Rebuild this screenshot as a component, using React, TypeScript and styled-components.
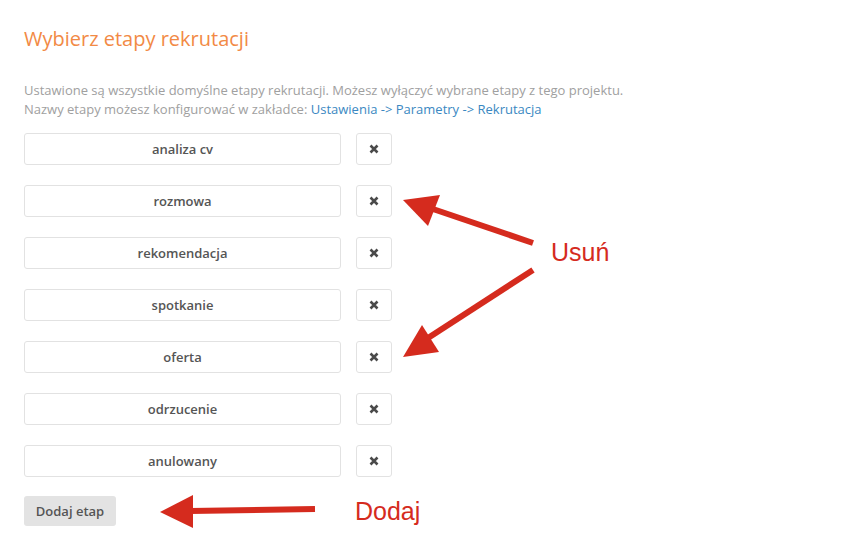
import React from "react";
import styled, { createGlobalStyle } from "styled-components";

const Global = createGlobalStyle`
  html, body { margin: 0; padding: 0; background: #fff; }
  body { font-family: "Open Sans", "Noto Sans", sans-serif; }
`;

const Page = styled.div`
  position: relative;
  width: 850px;
  height: 547px;
  overflow: hidden;
  padding: 25px 24px 0;
  box-sizing: border-box;
`;

const Title = styled.h2`
  margin: 0;
  font-size: 20px;
  line-height: 28px;
  font-weight: 400;
  color: #f28a45;
`;

const Description = styled.p`
  margin: 28px 0 0;
  font-size: 13px;
  line-height: 19px;
  color: #a0a0a0;
`;

const Link = styled.a`
  color: #3a88c2;
  text-decoration: none;
`;

const List = styled.div`
  display: flex;
  flex-direction: column;
  gap: 20px;
  margin-top: 14px;
`;

const Row = styled.div`
  display: flex;
  align-items: center;
  gap: 15px;
`;

const StageInput = styled.div`
  width: 317px;
  height: 32px;
  box-sizing: border-box;
  border: 1px solid #e2e2e2;
  border-radius: 3px;
  display: flex;
  align-items: center;
  justify-content: center;
  font-size: 13px;
  font-weight: 600;
  color: #555;
`;

const RemoveButton = styled.button`
  width: 36px;
  height: 32px;
  box-sizing: border-box;
  border: 1px solid #e2e2e2;
  border-radius: 3px;
  background: #fff;
  display: flex;
  align-items: center;
  justify-content: center;
  padding: 0;
  cursor: pointer;
`;

const AddButton = styled.button`
  margin-top: 19px;
  width: 92px;
  height: 30px;
  border: none;
  border-radius: 3px;
  background: #e3e3e3;
  color: #555;
  font-family: "Open Sans", sans-serif;
  font-size: 13px;
  font-weight: 600;
  padding: 0;
  cursor: pointer;
`;

const Overlay = styled.svg`
  position: absolute;
  left: 0;
  top: 0;
  pointer-events: none;
`;

const Note = styled.span<{ $x: number; $y: number }>`
  position: absolute;
  left: ${(p) => p.$x}px;
  top: ${(p) => p.$y}px;
  font-family: "Liberation Sans", Arial, sans-serif;
  font-size: 25px;
  line-height: 30px;
  color: #d52b1e;
`;

const XIcon = () => (
  <svg width="10" height="10" viewBox="0 0 10 10">
    <path d="M1.5 1.5 L8.5 8.5 M8.5 1.5 L1.5 8.5" stroke="#4a4a4a" strokeWidth="2.6" strokeLinecap="butt" />
  </svg>
);

const stages = ["analiza cv", "rozmowa", "rekomendacja", "spotkanie", "oferta", "odrzucenie", "anulowany"];

export default function App() {
  return (
    <Page>
      <Global />
      <Title>Wybierz etapy rekrutacji</Title>
      <Description>
        Ustawione są wszystkie domyślne etapy rekrutacji. Możesz wyłączyć wybrane etapy z tego projektu.
        <br />
        Nazwy etapy możesz konfigurować w zakładce: <Link>Ustawienia -&gt; Parametry -&gt; Rekrutacja</Link>
      </Description>
      <List>
        {stages.map((s) => (
          <Row key={s}>
            <StageInput>{s}</StageInput>
            <RemoveButton aria-label="Usuń">
              <XIcon />
            </RemoveButton>
          </Row>
        ))}
      </List>
      <AddButton>Dodaj etap</AddButton>

      <Overlay width="850" height="547" viewBox="0 0 850 547">
        <g fill="#d52b1e" stroke="none">
          <line x1="533" y1="243" x2="430" y2="208" stroke="#d52b1e" strokeWidth="6" />
          <polygon points="403,200 440,195 428,226" />
          <line x1="533" y1="270" x2="428" y2="338" stroke="#d52b1e" strokeWidth="6" />
          <polygon points="403,357 422,325 439,352" />
          <line x1="315" y1="509" x2="190" y2="511" stroke="#d52b1e" strokeWidth="6" />
          <polygon points="160,512 193,495 193,528" />
        </g>
      </Overlay>
      <Note $x={551} $y={237}>Usuń</Note>
      <Note $x={355} $y={496}>Dodaj</Note>
    </Page>
  );
}
